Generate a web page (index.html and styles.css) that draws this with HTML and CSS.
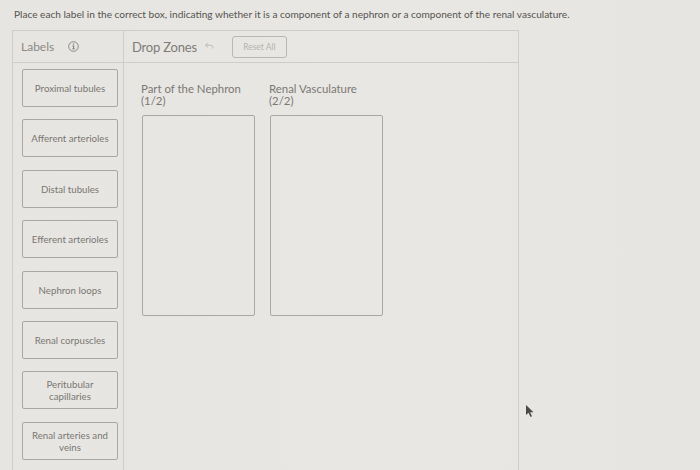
FILE: index.html
```html
<!DOCTYPE html>
<html>
<head>
<meta charset="utf-8">
<link rel="stylesheet" href="styles.css">
</head>
<body>
<p class="prompt">Place each label in the correct box, indicating whether it is a component of a nephron or a component of the renal vasculature.</p>
<div class="board">
  <div class="head">
    <div class="head-labels">
      <span>Labels</span>
      <svg class="info" width="11" height="11" viewBox="0 0 11 11"><circle cx="5.5" cy="5.5" r="4.8" fill="none" stroke="#8a8884" stroke-width="1"/><rect x="5" y="4.5" width="1.2" height="3.5" fill="#8a8884"/><rect x="4.2" y="4.5" width="1.4" height="0.9" fill="#8a8884"/><rect x="4.2" y="7.4" width="2.8" height="0.9" fill="#8a8884"/><circle cx="5.6" cy="3.1" r="0.75" fill="#8a8884"/></svg>
    </div>
    <div class="head-zones">
      <span class="dz">Drop Zones</span>
      <svg class="undo" width="10" height="8" viewBox="0 0 10 8"><path d="M1.5 3.2 L3.8 1 M1.5 3.2 L3.8 5.2 M1.5 3.2 H6.5 Q8.8 3.2 8.8 5.5 V6.5" fill="none" stroke="#b8b6b2" stroke-width="0.9"/></svg>
      <button class="reset">Reset All</button>
    </div>
  </div>
  <div class="body">
    <div class="labels">
      <div class="label">Proximal tubules</div>
      <div class="label">Afferent arterioles</div>
      <div class="label">Distal tubules</div>
      <div class="label">Efferent arterioles</div>
      <div class="label">Nephron loops</div>
      <div class="label">Renal corpuscles</div>
      <div class="label">Peritubular<br>capillaries</div>
      <div class="label">Renal arteries and<br>veins</div>
    </div>
    <div class="zones">
      <div class="zone">
        <div class="zone-title">Part of the Nephron<br>(1/2)</div>
        <div class="zone-box"></div>
      </div>
      <div class="zone">
        <div class="zone-title">Renal Vasculature<br>(2/2)</div>
        <div class="zone-box"></div>
      </div>
    </div>
  </div>
</div>
<svg class="cursor" width="10" height="14" viewBox="0 0 10 14"><path d="M1 1 L1 11 L3.5 8.8 L5.5 13 L7 12.3 L5.1 8.2 L8.5 8.2 Z" fill="#4a4a4a"/></svg>
</body>
</html>
```
FILE: styles.css
```css
html, body {
  margin: 0;
  padding: 0;
}
body {
  width: 700px;
  height: 470px;
  overflow: hidden;
  background: linear-gradient(90deg, #e7e5e1 0%, #e9e7e4 60%, #e6e5e2 100%);
  font-family: Lato, "Open Sans", sans-serif;
  color: #5a5855;
  position: relative;
}
.prompt {
  margin: 0;
  padding: 9px 0 0 14px;
  font-size: 10.1px;
  line-height: 11px;
  color: #55534f;
}
.board {
  margin: 10px 0 0 12px;
  width: 507px;
  height: 440px;
  border: 1px solid #cfcdc9;
  border-bottom: none;
  box-sizing: border-box;
  display: flex;
  flex-direction: column;
}
.head {
  display: flex;
  height: 31px;
  flex: none;
  border-bottom: 1px solid #cfcdc9;
}
.head-labels {
  width: 111px;
  border-right: 1px solid #cfcdc9;
  display: flex;
  align-items: center;
  padding-left: 8px;
  box-sizing: border-box;
  font-size: 12px;
  color: #8a8884;
  gap: 14px;
}
.head-zones {
  display: flex;
  align-items: center;
  padding-left: 8px;
  font-size: 13px;
  color: #7e7c78;
}
.dz { letter-spacing: -0.2px; }
.undo { margin-left: 7px; margin-top: -2px; }
.reset {
  margin-left: 18px;
  width: 55px;
  height: 22px;
  border: 1px solid #b9b7b3;
  border-radius: 3px;
  background: transparent;
  font-family: Lato, sans-serif;
  font-size: 8.5px;
  color: #b5b3af;
  padding: 0;
}
.body {
  display: flex;
  flex: 1;
  min-height: 0;
}
.labels {
  width: 111px;
  border-right: 1px solid #cfcdc9;
  box-sizing: border-box;
  padding: 6px 0 0 9px;
  display: flex;
  flex-direction: column;
  gap: 12.4px;
}
.label {
  width: 96px;
  height: 38px;
  flex: none;
  box-sizing: border-box;
  border: 1px solid #a9a7a3;
  border-radius: 2px;
  display: flex;
  align-items: center;
  justify-content: center;
  text-align: center;
  font-size: 9.7px;
  line-height: 12px;
  color: #787672;
}
.zones {
  display: flex;
  gap: 15px;
  padding: 20px 0 0 18px;
}
.zone {
  width: 113px;
}
.zone-title {
  font-size: 11.4px;
  line-height: 11.5px;
  color: #7a7874;
  height: 32px;
  margin-left: -1px;
  white-space: nowrap;
}
.zone-box {
  width: 113px;
  height: 201px;
  box-sizing: border-box;
  border: 1px solid #a9a7a3;
  border-radius: 2px;
}
.cursor {
  position: absolute;
  left: 525px;
  top: 404px;
}
```
